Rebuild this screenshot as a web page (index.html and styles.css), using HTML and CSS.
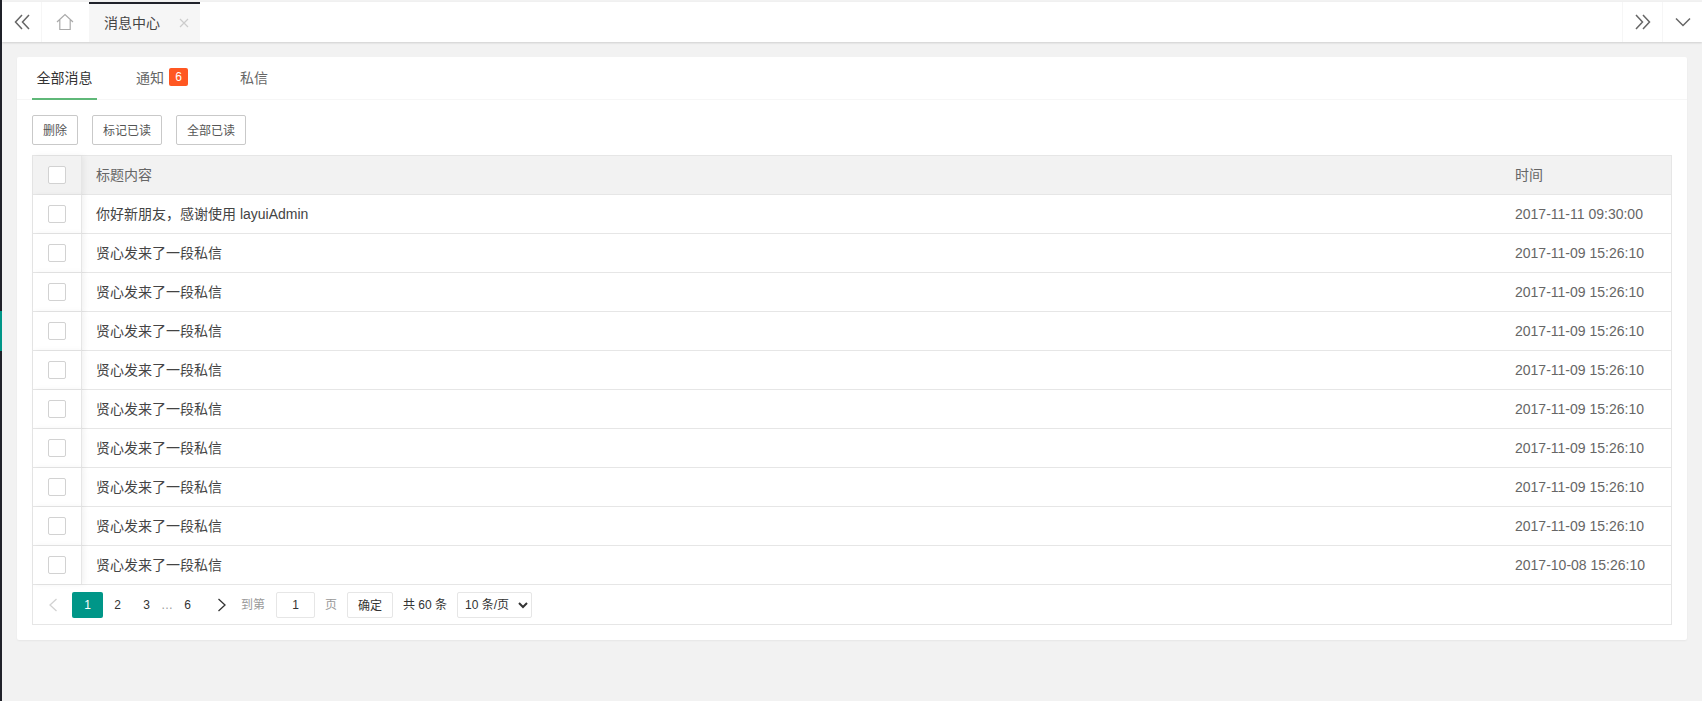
FILE: index.html
```html
<!DOCTYPE html>
<html lang="zh-CN">
<head>
<meta charset="utf-8">
<title>消息中心</title>
<link rel="stylesheet" href="styles.css">
</head>
<body>
<div class="app">
  <aside class="rail"><span class="rail-mark"></span></aside>
  <main class="main">
    <header class="tabbar">
      <div class="tool tool-l">
        <svg width="16" height="16" viewBox="0 0 16 16" class="ico"><path d="M8 1 1.500 8 8 15M15 1 8.500 8 15 15"/></svg>
      </div>
      <div class="tool tool-home">
        <svg width="18" height="18" viewBox="0 0 18 18" class="ico-light"><path d="M1 9 9 1.500 17 9M3.800 7v9.500h10.400V7"/></svg>
      </div>
      <div class="open-tab">
        <span>消息中心</span>
        <svg width="10" height="10" viewBox="0 0 10 10" class="ico-x"><path d="M1 1l8 8M9 1 1 9"/></svg>
      </div>
      <div class="spacer"></div>
      <div class="tool tool-r">
        <svg width="16" height="16" viewBox="0 0 16 16" class="ico"><path d="M1 1l6.500 7L1 15M8 1l6.500 7L8 15"/></svg>
      </div>
      <div class="tool tool-r">
        <svg width="16" height="16" viewBox="0 0 16 16" class="ico"><path d="M1 4.500l7 7 7-7"/></svg>
      </div>
    </header>

    <section class="card">
      <nav class="tabs">
        <a class="tab tab-on">全部消息</a>
        <a class="tab tab-notice">通知<span class="badge">6</span></a>
        <a class="tab">私信</a>
      </nav>
      <div class="content">
        <div class="actions">
          <button class="btn">删除</button>
          <button class="btn">标记已读</button>
          <button class="btn">全部已读</button>
        </div>
        <div class="grid">
          <table class="msgs">
            <thead>
              <tr><th class="c-check"><i class="box"></i></th><th>标题内容</th><th class="c-time">时间</th></tr>
            </thead>
            <tbody>
              <tr><td class="c-check"><i class="box"></i></td><td>你好新朋友，感谢使用 layuiAdmin</td><td class="c-time">2017-11-11 09:30:00</td></tr>
              <tr><td class="c-check"><i class="box"></i></td><td>贤心发来了一段私信</td><td class="c-time">2017-11-09 15:26:10</td></tr>
              <tr><td class="c-check"><i class="box"></i></td><td>贤心发来了一段私信</td><td class="c-time">2017-11-09 15:26:10</td></tr>
              <tr><td class="c-check"><i class="box"></i></td><td>贤心发来了一段私信</td><td class="c-time">2017-11-09 15:26:10</td></tr>
              <tr><td class="c-check"><i class="box"></i></td><td>贤心发来了一段私信</td><td class="c-time">2017-11-09 15:26:10</td></tr>
              <tr><td class="c-check"><i class="box"></i></td><td>贤心发来了一段私信</td><td class="c-time">2017-11-09 15:26:10</td></tr>
              <tr><td class="c-check"><i class="box"></i></td><td>贤心发来了一段私信</td><td class="c-time">2017-11-09 15:26:10</td></tr>
              <tr><td class="c-check"><i class="box"></i></td><td>贤心发来了一段私信</td><td class="c-time">2017-11-09 15:26:10</td></tr>
              <tr><td class="c-check"><i class="box"></i></td><td>贤心发来了一段私信</td><td class="c-time">2017-11-09 15:26:10</td></tr>
              <tr><td class="c-check"><i class="box"></i></td><td>贤心发来了一段私信</td><td class="c-time">2017-10-08 15:26:10</td></tr>
            </tbody>
          </table>
          <div class="pager">
            <svg width="10" height="14" viewBox="0 0 10 14" class="chev chev-off"><path d="M8.500 1 2 7l6.500 6"/></svg>
            <span class="pg pg-on">1</span>
            <span class="pg">2</span>
            <span class="pg">3</span>
            <span class="dots">…</span>
            <span class="pg">6</span>
            <svg width="10" height="14" viewBox="0 0 10 14" class="chev chev-next"><path d="M1.500 1 8 7l-6.500 6"/></svg>
            <span class="muted goto">到第</span>
            <input class="pg-input" value="1">
            <span class="muted page-word">页</span>
            <button class="pg-ok">确定</button>
            <span class="count">共 60 条</span>
            <select class="pg-size"><option>10 条/页</option></select>
          </div>
        </div>
      </div>
    </section>
  </main>
</div>
</body>
</html>
```
FILE: styles.css
```css
* { box-sizing: border-box; }
html, body { margin: 0; height: 100%; }
body {
  font: 14px/24px "Liberation Sans", "Noto Sans CJK SC", sans-serif;
  color: #444;
  background: #f2f2f2;
  overflow: hidden;
}
.app { display: flex; height: 701px; }
.rail { width: 2px; flex: none; background: #20222a; padding-top: 311px; }
.rail-mark { display: block; height: 40px; background: #009688; }
.main { flex: 1; min-width: 0; padding-top: 2px; }

.tabbar {
  display: flex;
  height: 40px;
  background: #fff;
  box-shadow: 0 1px 2px rgba(0, 0, 0, .15);
}
.tool {
  width: 40px;
  display: flex;
  align-items: center;
  justify-content: center;
  flex: none;
}
.tool-l { border-right: 1px solid #f6f6f6; }
.tool-r { border-left: 1px solid #f6f6f6; }
.tool-home { width: 47px; padding-right: 2px; }
.ico, .ico-light, .ico-x { fill: none; }
.ico { stroke: #666; stroke-width: 1.5; }
.ico-light { stroke: #aaa; stroke-width: 1.2; }
.ico-x { stroke: #ccc; stroke-width: 1.2; margin-left: 19px; }
.open-tab {
  width: 111px;
  flex: none;
  display: flex;
  align-items: center;
  padding-left: 15px;
  background: #f6f6f6;
  border-top: 2px solid #20222a;
}
.spacer { flex: 1; }

.card {
  margin: 15px 15px 0;
  height: 583px;
  background: #fff;
  border-radius: 2px;
  box-shadow: 0 1px 2px 0 rgba(0, 0, 0, .05);
}
.tabs {
  display: flex;
  height: 43px;
  padding: 0 15px;
  border-bottom: 1px solid #f6f6f6;
}
.tab {
  height: 43px;
  line-height: 42px;
  color: #666;
  white-space: nowrap;
}
.tab-on {
  width: 65px;
  margin-right: 39px;
  text-align: center;
  color: #333;
  border-bottom: 2px solid #5fb878;
}
.tab-notice { width: 52px; margin-right: 52px; }
.badge {
  display: inline-block;
  width: 19px;
  height: 18px;
  margin-left: 5px;
  line-height: 18px;
  vertical-align: 2px;
  border-radius: 2px;
  background: #ff5722;
  color: #fff;
  font-size: 12px;
  text-align: center;
}

.content { padding: 15px 15px 0; }
.actions { display: flex; gap: 14px; margin-bottom: 10px; }
.btn {
  height: 30px;
  padding: 1px 10px 0;
  font: 12px/28px "Liberation Sans", "Noto Sans CJK SC", sans-serif;
  color: #555;
  background: #fff;
  border: 1px solid #c9c9c9;
  border-radius: 2px;
}
.grid { border: 1px solid #e6e6e6; height: 470px; }
.msgs { width: 100%; border-collapse: separate; border-spacing: 0; table-layout: fixed; }
.msgs th, .msgs td {
  height: 39px;
  padding: 0 15px 0 14px;
  border-bottom: 1px solid #e6e6e6;
  font-weight: 400;
  text-align: left;
}
.msgs th { color: #666; background: #f2f2f2; }
.msgs tr:last-child td { border-bottom: 0; height: 38px; }
.msgs .c-check {
  position: relative;
  z-index: 1;
  width: 49px;
  padding: 0;
  text-align: center;
  background: #fff;
  border-right: 1px solid #e6e6e6;
  box-shadow: 2px 0 6px rgba(0, 0, 0, .06);
}
.msgs th.c-check { background: #f2f2f2; }
.msgs .c-time { width: 156px; color: #666; padding: 0; }
.box {
  display: block;
  width: 18px;
  height: 18px;
  margin: 0 auto;
  background: #fff;
  border: 1px solid #d2d2d2;
  border-radius: 2px;
}

.pager {
  display: flex;
  align-items: center;
  height: 40px;
  border-top: 1px solid #e6e6e6;
  font-size: 12px;
  color: #333;
  padding-left: 15px;
}
.chev { fill: none; flex: none; stroke-width: 1.3; }
.chev-off { stroke: #d2d2d2; margin-right: 14px; }
.chev-next { stroke: #333; margin: 0 14px 0 15px; }
.pg { width: 29px; text-align: center; height: 26px; line-height: 26px; flex: none; }
.pg-on {
  width: 31px;
  color: #fff;
  background: #009688;
  border-radius: 2px;
}
.dots { color: #999; width: 12px; text-align: center; }
.muted { color: #999; }
.goto { margin-right: 11px; }
.pg-input {
  width: 39px;
  height: 26px;
  padding: 0;
  border: 1px solid #e6e6e6;
  border-radius: 2px;
  background: #fff;
  font: 12px "Liberation Sans", sans-serif;
  color: #333;
  text-align: center;
  margin-right: 10px;
}
.page-word { margin-right: 10px; }
.pg-ok {
  width: 46px;
  height: 26px;
  padding: 0;
  border: 1px solid #e6e6e6;
  border-radius: 2px;
  background: #fff;
  font: 12px "Liberation Sans", "Noto Sans CJK SC", sans-serif;
  color: #333;
  margin-right: 10px;
}
.count { color: #333; margin-right: 10px; }
.pg-size {
  width: 75px;
  height: 26px;
  padding: 0 0 0 3px;
  border: 1px solid #e6e6e6;
  border-radius: 2px;
  background: #fff;
  font: 12px "Liberation Sans", "Noto Sans CJK SC", sans-serif;
  color: #333;
}
```
